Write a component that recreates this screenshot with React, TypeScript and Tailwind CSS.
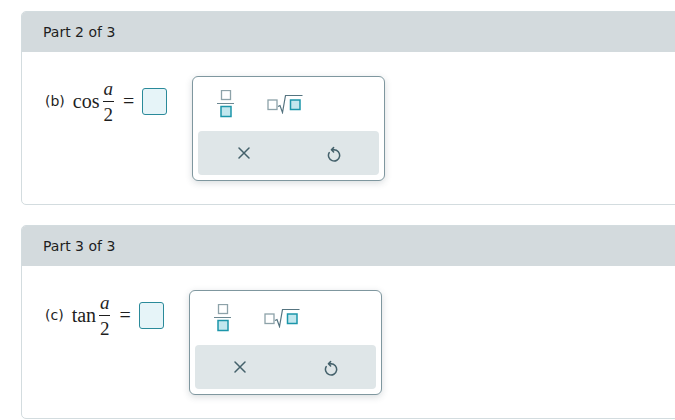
import React from 'react';

function FractionIcon() {
  return (
    <svg width="17" height="28" viewBox="0 0 17 28">
      <rect x="4.5" y="0.5" width="9" height="9" fill="#fff" stroke="#8da2a9" strokeWidth="1.3" />
      <line x1="0" y1="13.5" x2="17" y2="13.5" stroke="#6d8892" strokeWidth="1.2" />
      <rect x="4" y="16.5" width="10" height="10" fill="#c2e7ee" stroke="#1c96aa" strokeWidth="1.5" />
    </svg>
  );
}

function SqrtIcon() {
  return (
    <svg width="36" height="20" viewBox="0 0 36 20">
      <rect x="1" y="6" width="9" height="9.5" fill="#fff" stroke="#8da2a9" strokeWidth="1.3" />
      <path d="M11 12.5 L13 11.5 L15.5 18.5 L18.5 1.5 H35.5" fill="none" stroke="#557480" strokeWidth="1.2" />
      <rect x="23.5" y="6" width="9.5" height="9.5" fill="#c2e7ee" stroke="#1c96aa" strokeWidth="1.5" />
    </svg>
  );
}

function CloseIcon() {
  return (
    <svg width="12" height="12" viewBox="0 0 12 12">
      <path d="M1 1 L11 11 M11 1 L1 11" stroke="#44616b" strokeWidth="1.5" strokeLinecap="round" />
    </svg>
  );
}

function UndoIcon() {
  return (
    <svg width="16" height="17" viewBox="0 0 16 17">
      <path d="M8 4.8 A5.6 5.6 0 1 1 3.2 7.6" fill="none" stroke="#44616b" strokeWidth="1.5" strokeLinecap="round" />
      <path d="M8 4.8 H5.6 M7.6 2.6 L5.4 4.8 L7.6 7" fill="none" stroke="#44616b" strokeWidth="1.5" strokeLinecap="round" strokeLinejoin="round" />
    </svg>
  );
}

function Keypad() {
  return (
    <div className="w-[193px] h-[105px] flex flex-col rounded-[6px] border border-[#7f979f] bg-white shadow-[0_2px_7px_rgba(40,60,70,0.18)]">
      <div className="h-[54px] flex items-center pl-[24px]">
        <FractionIcon />
        <div className="ml-[33px] mt-[-1px]">
          <SqrtIcon />
        </div>
      </div>
      <div className="mx-[5px] mb-[5px] flex-1 grid grid-cols-2 rounded-[4px] bg-[#dfe6e8]">
        <div className="flex items-center justify-center">
          <CloseIcon />
        </div>
        <div className="flex items-center justify-center">
          <UndoIcon />
        </div>
      </div>
    </div>
  );
}

function PartCard({ title, label, fn }: { title: string; label: string; fn: string }) {
  return (
    <div className="w-[720px] rounded-[5px] border border-[#d3dcdf] bg-white overflow-hidden">
      <div className="h-[40px] flex items-center pl-[21px] bg-[#d3dadd] text-[14px] text-[#1e1e1e] font-['DejaVu_Sans']">
        {title}
      </div>
      <div className="h-[152px] flex items-start pt-[24px] pl-[23px]">
        <div className="h-[50px] flex items-center text-[#1e1e1e]">
          <span className="text-[14px] font-['DejaVu_Sans']">{label}</span>
          <span className="ml-[8px] text-[20px] font-['Liberation_Serif']">{fn}</span>
          <span className="ml-[3px] inline-flex flex-col items-center text-[19px] leading-none font-['Liberation_Serif']">
            <span className="italic pb-[3px] px-[1px]">a</span>
            <span className="block w-[11px] h-[1px] bg-[#1e1e1e]" />
            <span className="pt-[3px]">2</span>
          </span>
          <span className="ml-[9px] text-[20px] font-['Liberation_Serif']">=</span>
          <span className="ml-[8px] block w-[25px] h-[27px] rounded-[3px] border-[1.5px] border-[#2a8a9a] bg-[#e6f4f8]" />
        </div>
        <div className="ml-[25px]">
          <Keypad />
        </div>
      </div>
    </div>
  );
}

export default function App() {
  return (
    <div className="w-[675px] h-[420px] overflow-hidden bg-white pt-[11px] pl-[21px]">
      <div className="flex flex-col gap-[20px]">
        <PartCard title="Part 2 of 3" label="(b)" fn="cos" />
        <PartCard title="Part 3 of 3" label="(c)" fn="tan" />
      </div>
    </div>
  );
}
